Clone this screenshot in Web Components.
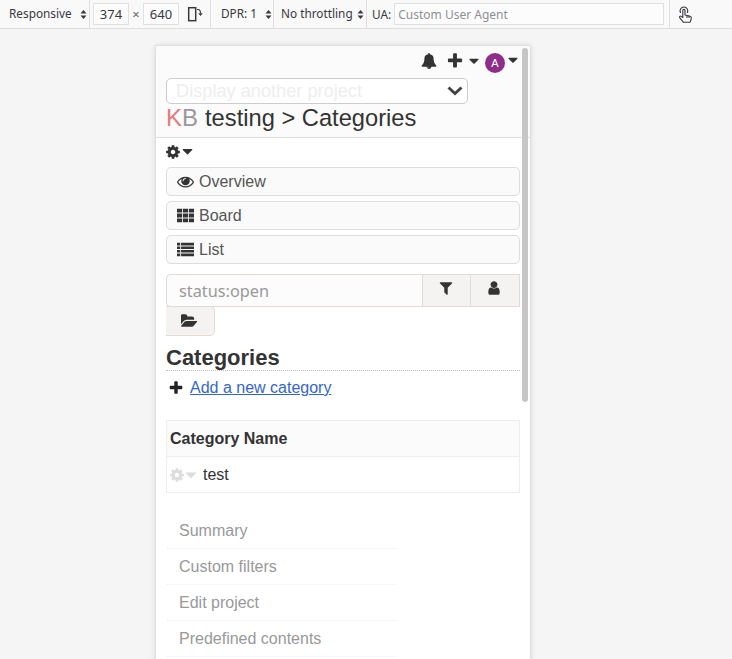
<!DOCTYPE html>
<html lang="en">
<head>
<meta charset="utf-8">
<title>Categories</title>
<style>
  html, body { margin: 0; height: 659px; overflow: hidden; background: #f5f5f5; }
</style>
</head>
<body>
<responsive-page>
  <dev-toolbar slot="toolbar"></dev-toolbar>
  <device-frame slot="device">
    <app-header></app-header>
    <page-body>
      <project-actions></project-actions>
      <nav-button icon="eye">Overview</nav-button>
      <nav-button icon="th">Board</nav-button>
      <nav-button icon="list">List</nav-button>
      <filter-box></filter-box>
      <section-title>Categories</section-title>
      <add-link>Add a new category</add-link>
      <category-table></category-table>
      <side-menu>
        <menu-row>Summary</menu-row>
        <menu-row>Custom filters</menu-row>
        <menu-row>Edit project</menu-row>
        <menu-row>Predefined contents</menu-row>
      </side-menu>
    </page-body>
  </device-frame>
</responsive-page>

<script>
  // FontAwesome 4 style glyphs, all on the 1792 grid
  const ICONS = {
    plus: "M1600 736v192q0 40-28 68t-68 28h-416v416q0 40-28 68t-68 28h-192q-40 0-68-28t-28-68v-416h-416q-40 0-68-28t-28-68v-192q0-40 28-68t68-28h416v-416q0-40 28-68t68-28h192q40 0 68 28t28 68v416h416q40 0 68 28t28 68z",
    caret: "M1408 704q0 26-19 45l-448 448q-19 19-45 19t-45-19l-448-448q-19-19-19-45t19-45 45-19h896q26 0 45 19t19 45z",
    bell: "M912 1696q0-16-16-16-59 0-101.5-42.5t-42.5-101.5q0-16-16-16t-16 16q0 73 51.5 124.5t124.5 51.5q16 0 16-16zm816-288q0 52-38 90t-90 38h-448q0 106-75 181t-181 75-181-75-75-181h-448q-52 0-90-38t-38-90q50-42 91-88t85-119.5 74.5-158.5 50-206 19.5-260q0-152 117-282.5t307-158.5q-8-19-8-39 0-40 28-68t68-28 68 28 28 68q0 20-8 39 190 28 307 158.5t117 282.5q0 139 19.5 260t50 206 74.5 158.5 85 119.5 91 88z",
    cog: "M1152 896q0-106-75-181t-181-75-181 75-75 181 75 181 181 75 181-75 75-181zm512-109v222q0 12-8 23t-20 13l-185 28q-19 54-39 91 35 50 107 138 10 12 10 25t-9 23q-27 37-99 108t-94 71q-12 0-26-9l-138-108q-44 23-91 38-16 136-29 186-7 28-36 28h-222q-14 0-24.5-8.5t-11.5-21.5l-28-184q-49-16-90-37l-141 107q-10 9-25 9-14 0-25-11-126-114-165-168-7-10-7-23 0-12 8-23 15-21 51-66.5t54-70.5q-27-50-41-99l-183-27q-13-2-21-12.5t-8-23.5v-222q0-12 8-23t19-13l186-28q14-46 39-92-40-57-107-138-10-12-10-24 0-10 9-23 26-36 98.5-107.5t94.5-71.5q13 0 26 10l138 107q44-23 91-38 16-136 29-186 7-28 36-28h222q14 0 24.5 8.5t11.5 21.5l28 184q49 16 90 37l142-107q9-9 24-9 13 0 25 10 129 119 165 170 7 8 7 22 0 12-8 23-15 21-51 66.5t-54 70.5q26 50 41 98l183 28q13 2 21 12.5t8 23.5z",
    eye: "M1664 960q-152-236-381-353 61 104 61 225 0 185-131.5 316.5t-316.5 131.5-316.5-131.5-131.5-316.5q0-121 61-225-229 117-381 353 133 205 333.5 326.5t434.5 121.5 434.5-121.5 333.5-326.5zm-720-384q0-20-14-34t-34-14q-125 0-214.5 89.5t-89.5 214.5q0 20 14 34t34 14 34-14 14-34q0-86 61-147t147-61q20 0 34-14t14-34zm848 384q0 34-20 69-140 230-376.5 368.5t-499.5 138.5-499.5-139-376.5-368q-20-35-20-69t20-69q140-229 376.5-368t499.5-139 499.5 139 376.5 368q20 35 20 69z",
    th: "M0 192h540v400H0zM626 192h540v400H626zM1252 192h540v400h-540zM0 696h540v400H0zM626 696h540v400H626zM1252 696h540v400h-540zM0 1200h540v400H0zM626 1200h540v400H626zM1252 1200h540v400h-540z",
    list: "M0 192h340v280H0zM430 192h1362v280H430zM0 568h340v280H0zM430 568h1362v280H430zM0 944h340v280H0zM430 944h1362v280H430zM0 1320h340v280H0zM430 1320h1362v280H430z",
    filter: "M1595 295q17 41-14 70l-493 493v742q0 42-39 59-13 5-25 5-27 0-45-19l-256-256q-19-19-19-45v-486l-493-493q-31-29-14-70 17-39 59-39h1280q42 0 59 39z",
    user: "M1536 1399q0 109-62.5 187t-150.5 78h-854q-88 0-150.5-78t-62.5-187q0-85 8.5-160.5t31.5-152 58.5-131 94-89 134.5-34.5q131 128 313 128t313-128q76 0 134.5 34.5t94 89 58.5 131 31.5 152 8.5 160.5zm-256-887q0 159-112.5 271.5t-271.5 112.5-271.5-112.5-112.5-271.5 112.5-271.5 271.5-112.5 271.5 112.5 112.5 271.5z",
    folder: "M1815 952q0 31-31 66l-336 396q-43 51-120.5 86.5t-143.5 35.5h-1088q-34 0-60.5-13t-26.5-43q0-31 31-66l336-396q43-51 120.5-86.5t143.5-35.5h1088q34 0 60.5 13t26.5 43zm-343-344v160h-832q-94 0-197 47.5t-164 119.5l-337 396-5 6q0-4-.5-12.5t-.5-12.5v-960q0-92 66-158t158-66h320q92 0 158 66t66 158v32h544q92 0 158 66t66 158z"
  };

  class FaIcon extends HTMLElement {
    connectedCallback() {
      const name = this.getAttribute("name");
      const size = this.getAttribute("size") || 16;
      const box = name === "folder" ? "0 0 1920 1792" : "0 0 1792 1792";
      const width = name === "folder" ? size * 1920 / 1792 : size;
      this.attachShadow({ mode: "open" }).innerHTML = `
        <style>
          :host { display: inline-flex; flex: none; }
          svg { display: block; fill: currentColor; }
        </style>
        <svg width="${width}" height="${size}" viewBox="${box}"><path d="${ICONS[name]}"/></svg>
      `;
    }
  }
  customElements.define("fa-icon", FaIcon);

  class ResponsivePage extends HTMLElement {
    constructor() {
      super();
      this.attachShadow({ mode: "open" }).innerHTML = `
        <style>
          :host { display: block; height: 659px; overflow: hidden; background: #f5f5f5; }
          .stage { display: flex; padding: 16px 0 0 155px; }
        </style>
        <slot name="toolbar"></slot>
        <div class="stage"><slot name="device"></slot></div>
      `;
    }
  }
  customElements.define("responsive-page", ResponsivePage);

  class DevToolbar extends HTMLElement {
    constructor() {
      super();
      const arrows = `<svg class="arrows" width="7" height="9" viewBox="0 0 7 9"><path d="M3.5 0L6.5 3.5H.5zM3.5 9L.5 5.5h6z"/></svg>`;
      this.attachShadow({ mode: "open" }).innerHTML = `
        <style>
          :host {
            display: flex; height: 28px; box-sizing: content-box; align-items: stretch;
            background: #f9f9f9; border-bottom: 1px solid #e0e0e0;
            font: 11.8px "Noto Sans", sans-serif; color: #38383d; white-space: nowrap;
          }
          .group { display: flex; align-items: center; border-right: 1px solid #e0e0e0; flex: none; box-sizing: border-box; }
          .sel { gap: 8px; padding-bottom: 2px; }
          .arrows { fill: #38383d; margin-top: 2px; flex: none; }
          .box {
            box-sizing: border-box; height: 22px; border: 1px solid #e0e0e0; background: #fcfcfc;
            display: flex; align-items: center; justify-content: center;
          }
          .size { width: 36px; font-size: 13px; }
          .times { width: 14px; text-align: center; color: #666; font-size: 13px; }
          .ua-input { width: 270px; justify-content: flex-start; padding-left: 3px; color: #8f8f94; font-size: 12px; margin-left: 3px; }
        </style>
        <div class="group sel" style="width:90px;padding-left:9px">Responsive ${arrows}</div>
        <div class="group" style="width:121px;padding-left:3px">
          <div class="box size">374</div><div class="times">×</div><div class="box size">640</div>
          <svg style="margin-left:8px" width="16" height="16" viewBox="0 0 16 16" fill="none" stroke="#38383d">
            <rect x="1.700" y="1.700" width="7" height="13" stroke-width="1.500"/>
            <path d="M10 3.500c2.500-.4 3.500.8 3.500 4" stroke-width="1.100"/>
            <path d="M11.200 7.300h4.600l-2.300 2.600z" fill="#38383d" stroke="none"/>
          </svg>
        </div>
        <div class="group sel" style="width:63px;padding-left:10px;gap:8px">DPR: 1 ${arrows}</div>
        <div class="group sel" style="width:93px;padding-left:7px;gap:4px">No throttling ${arrows}</div>
        <div class="group" style="width:303px;padding-left:5px">UA:<div class="box ua-input">Custom User Agent</div></div>
        <div class="group" style="border:0;padding-left:8px">
          <svg width="14" height="17" viewBox="0 0 14 17" fill="none" stroke="#38383d" stroke-width="1.100" stroke-linecap="round" stroke-linejoin="round">
            <path d="M2.500 6.500a3.800 3.800 0 1 1 6.800 0"/>
            <path d="M4.800 11.500V4.500a1.100 1.100 0 0 1 2.200 0V9l5 1.200c.9.200 1.300.8 1.300 1.600 0 1.600-.5 3-1.300 4.500H5.500L1.800 11.800c-.9-1 .4-2.300 1.500-1.400z"/>
            <path d="M9 9.500v2M11 10v1.500"/>
          </svg>
        </div>
      `;
    }
  }
  customElements.define("dev-toolbar", DevToolbar);

  class DeviceFrame extends HTMLElement {
    constructor() {
      super();
      this.attachShadow({ mode: "open" }).innerHTML = `
        <style>
          :host {
            display: block; position: relative; box-sizing: content-box; width: 374px; height: 640px;
            border: 1px solid #e0e0e0; box-shadow: 0 0 5px rgba(0,0,0,.12); background: #fff;
            font: 16px "Liberation Sans", Arial, sans-serif; color: #333;
          }
          .scrollbar {
            position: absolute; top: 2px; right: 2px; width: 6px; height: 354px;
            border-radius: 3px; background: #c6c6c6;
          }
        </style>
        <slot></slot>
        <div class="scrollbar"></div>
      `;
    }
  }
  customElements.define("device-frame", DeviceFrame);

  class AppHeader extends HTMLElement {
    constructor() {
      super();
      this.attachShadow({ mode: "open" }).innerHTML = `
        <style>
          :host {
            display: block; box-sizing: border-box; height: 92px; padding: 3px 10px 0;
            background: #fbfbfb; border-bottom: 1px solid #dedede; color: #333;
          }
          .menu { display: flex; justify-content: flex-end; align-items: center; height: 24px; margin-right: -1px; }
          .avatar {
            width: 20px; height: 20px; border-radius: 50%; background: #8e2d8a; color: #fff;
            font-size: 11px; display: flex; align-items: center; justify-content: center;
            margin: 4px 0 0 3px;
          }
          .select {
            box-sizing: border-box; width: 302px; height: 26px; margin-top: 5px;
            border: 1px solid #ccc; border-radius: 5px; background: #fff; padding-left: 9px;
            display: flex; align-items: center; justify-content: space-between;
            font-size: 18.2px; color: #eee; white-space: nowrap;
          }
          .select svg { margin-right: 4px; }
          h1 { margin: 0; font-size: 23.7px; font-weight: 400; line-height: 28px; white-space: nowrap; }
          .k { color: #e47b7b; font-size: 24px; }
          .b { color: #999; margin-right: 7px; font-size: 24px; }
        </style>
        <div class="menu">
          <fa-icon name="bell" size="16"></fa-icon>
          <fa-icon name="plus" size="18" style="margin-left:9.5px"></fa-icon>
          <fa-icon name="caret" size="16" style="margin-left:2px"></fa-icon>
          <div class="avatar">A</div>
          <fa-icon name="caret" size="16" style="margin-top:-2px"></fa-icon>
        </div>
        <div class="select">Display another project
          <svg width="16" height="10" viewBox="0 0 16 10" fill="none" stroke="#444" stroke-width="3"><path d="M1.500 1.500l6.500 6 6.500-6"/></svg>
        </div>
        <h1><span class="k">K</span><span class="b">B</span>testing &gt; Categories</h1>
      `;
    }
  }
  customElements.define("app-header", AppHeader);

  class PageBody extends HTMLElement {
    constructor() {
      super();
      this.attachShadow({ mode: "open" }).innerHTML = `
        <style>:host { display: block; padding: 6px 10px 0; }</style>
        <slot></slot>
      `;
    }
  }
  customElements.define("page-body", PageBody);

  class ProjectActions extends HTMLElement {
    constructor() {
      super();
      this.attachShadow({ mode: "open" }).innerHTML = `
        <style>:host { display: flex; align-items: center; height: 15px; margin-bottom: 8px; color: #333; }</style>
        <fa-icon name="cog" size="16" style="margin-left:-1px"></fa-icon>
        <fa-icon name="caret" size="17" style="margin-left:-2px"></fa-icon>
      `;
    }
  }
  customElements.define("project-actions", ProjectActions);

  class NavButton extends HTMLElement {
    constructor() {
      super();
      this.attachShadow({ mode: "open" });
    }
    connectedCallback() {
      this.shadowRoot.innerHTML = `
        <style>
          :host {
            display: flex; align-items: center; box-sizing: border-box; height: 29px; margin-bottom: 5px;
            padding-left: 10px; gap: 5px; border: 1px solid #ddd; border-radius: 5px;
            background: #fafafa; color: #555;
          }
          fa-icon { color: #333; }
        </style>
        <fa-icon name="${this.getAttribute("icon")}" size="17"></fa-icon>
        <slot></slot>
      `;
    }
  }
  customElements.define("nav-button", NavButton);

  class FilterBox extends HTMLElement {
    constructor() {
      super();
      this.attachShadow({ mode: "open" }).innerHTML = `
        <style>
          :host { display: block; margin-top: 10px; }
          .row { display: flex; height: 33px; box-sizing: border-box; }
          .input {
            flex: 1; box-sizing: border-box; border: 1px solid #e2dad4; border-right: 0;
            border-radius: 5px 0 0 5px; padding-left: 12px; display: flex; align-items: center;
            background: #fcfcfc; color: #999; font: 16.3px "Noto Sans", sans-serif;
          }
          .btn {
            box-sizing: border-box; width: 49px; border: 1px solid #e2dad4;
            background: #f5f3f1; color: #333; display: flex; justify-content: center;
            padding: 5px 2px 0 0;
          }
          .btn + .btn { border-left: 0; }
          .folder {
            box-sizing: border-box; width: 49px; height: 30px; background: #f5f3f1; margin-top: -1px;
            border: 1px solid #e2dad4; border-left: 0; border-radius: 0 5px 5px 0;
            display: flex; justify-content: center; align-items: center; color: #333;
          }
        </style>
        <div class="row">
          <div class="input">status:open</div>
          <div class="btn"><fa-icon name="filter" size="16"></fa-icon></div>
          <div class="btn"><fa-icon name="user" size="16"></fa-icon></div>
        </div>
        <div class="folder"><fa-icon name="folder" size="16"></fa-icon></div>
      `;
    }
  }
  customElements.define("filter-box", FilterBox);

  class SectionTitle extends HTMLElement {
    constructor() {
      super();
      this.attachShadow({ mode: "open" }).innerHTML = `
        <style>
          :host {
            display: block; box-sizing: border-box; height: 25px; margin-top: 10px;
            font-size: 22px; line-height: 24px; font-weight: 700;
            border-bottom: 1px dotted #bbb; color: #333;
          }
        </style>
        <slot></slot>
      `;
    }
  }
  customElements.define("section-title", SectionTitle);

  class AddLink extends HTMLElement {
    constructor() {
      super();
      this.attachShadow({ mode: "open" }).innerHTML = `
        <style>
          :host { display: flex; align-items: center; height: 33px; padding: 1px 0 0 2px; box-sizing: border-box; gap: 6px; }
          a { color: #36c; text-decoration: underline; }
          fa-icon { color: #222; }
        </style>
        <fa-icon name="plus" size="16"></fa-icon>
        <a href="#"><slot></slot></a>
      `;
    }
  }
  customElements.define("add-link", AddLink);

  class CategoryTable extends HTMLElement {
    constructor() {
      super();
      this.attachShadow({ mode: "open" }).innerHTML = `
        <style>
          :host { display: block; margin-top: 16px; border: 1px solid #eee; border-bottom: 0; color: #333; }
          .row { box-sizing: border-box; height: 36px; display: flex; align-items: center; padding-left: 3px; border-bottom: 1px solid #eee; }
          .head { font-weight: 700; background: #fbfbfb; }
          .actions { display: flex; align-items: center; color: #ddd; margin: 0 3px 0 -1px; }
        </style>
        <div class="row head">Category Name</div>
        <div class="row">
          <div class="actions"><fa-icon name="cog" size="16"></fa-icon><fa-icon name="caret" size="18" style="margin-left:-3px"></fa-icon></div>
          test
        </div>
      `;
    }
  }
  customElements.define("category-table", CategoryTable);

  class SideMenu extends HTMLElement {
    constructor() {
      super();
      this.attachShadow({ mode: "open" }).innerHTML = `
        <style>:host { display: block; width: 229px; margin-top: 20px; padding-left: 1px; }</style>
        <slot></slot>
      `;
    }
  }
  customElements.define("side-menu", SideMenu);

  class MenuRow extends HTMLElement {
    constructor() {
      super();
      this.attachShadow({ mode: "open" }).innerHTML = `
        <style>
          :host {
            display: block; box-sizing: border-box; height: 36px; line-height: 36px; padding-left: 12px;
            border-bottom: 1px dotted #eee; color: #999;
          }
        </style>
        <slot></slot>
      `;
    }
  }
  customElements.define("menu-row", MenuRow);
</script>
</body>
</html>
